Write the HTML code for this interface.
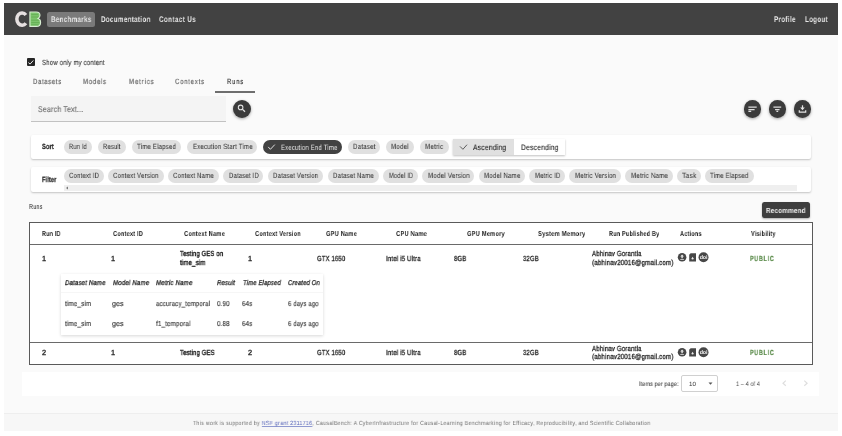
<!DOCTYPE html>
<html><head><meta charset="utf-8"><style>
html,body{margin:0;padding:0;background:#fff;width:842px;height:436px;overflow:hidden}
body{position:relative;font-family:"Liberation Sans",sans-serif}
.t{position:absolute;white-space:nowrap;font-family:"Liberation Sans",sans-serif;will-change:transform;text-rendering:geometricPrecision}
.r{position:absolute;box-sizing:border-box}
svg.r{overflow:visible}
</style></head><body>
<div class="r" style="left:4px;top:3px;width:834.00px;height:428.00px;background:#fafafa"></div>
<div class="r" style="left:4px;top:3px;width:834.00px;height:32.30px;background:#424242"></div>
<svg class="r" style="left:13px;top:10px" width="32" height="18" viewBox="0 0 32 18"><path d="M12.9 5.0 A5.2 6.1 0 1 0 12.9 13.2" fill="none" stroke="#e6e0e0" stroke-width="3.5"/><path d="M16.9 2.0 H23.2 C26.0 2.0 27.0 3.6 27.0 5.3 C27.0 6.8 26.2 7.9 25.1 8.5 C26.8 9.1 27.6 10.6 27.6 12.4 C27.6 14.9 25.9 16.4 23.3 16.4 H16.9 Z" fill="#7cc46c" stroke="#d8eed2" stroke-width="1.1"/><path d="M18.2 4.6 H25 M18.2 7 H25.4 M18.2 10.2 H26.2 M18.2 12.6 H26.2 M18.2 14.8 H25.5" stroke="#58a348" stroke-width="0.6"/></svg>
<div class="r" style="left:47px;top:11.5px;width:48.00px;height:15.90px;background:#7a7a7a;border-radius:2.5px"></div>
<div class="t" style="left:50.70px;top:16.00px;font-size:8.2px;line-height:8.2px;font-weight:bold;letter-spacing:0.422px;color:#e6e6e6;transform:scaleX(0.760);transform-origin:0 0;">Benchmarks</div>
<div class="t" style="left:100.60px;top:16.00px;font-size:8.2px;line-height:8.2px;font-weight:bold;letter-spacing:0.443px;color:#e6e6e6;transform:scaleX(0.760);transform-origin:0 0;">Documentation</div>
<div class="t" style="left:158.80px;top:16.00px;font-size:8.2px;line-height:8.2px;font-weight:bold;letter-spacing:0.571px;color:#e6e6e6;transform:scaleX(0.760);transform-origin:0 0;">Contact Us</div>
<div class="t" style="left:773.50px;top:16.00px;font-size:8.2px;line-height:8.2px;font-weight:bold;letter-spacing:0.484px;color:#e6e6e6;transform:scaleX(0.760);transform-origin:0 0;">Profile</div>
<div class="t" style="left:804.60px;top:16.00px;font-size:8.2px;line-height:8.2px;font-weight:bold;letter-spacing:0.393px;color:#e6e6e6;transform:scaleX(0.760);transform-origin:0 0;">Logout</div>
<div class="r" style="left:26.8px;top:58px;width:8.30px;height:8.20px;background:#262626;border-radius:1px"></div>
<svg class="r" style="left:26.8px;top:58px" width="8.3" height="8.2" viewBox="0 0 8.3 8.2"><path d="M1.4 4.6 L3.1 6.1 L6.3 2.5" fill="none" stroke="#eee" stroke-width="1.0"/></svg>
<div class="t" style="left:41.70px;top:59.00px;font-size:7.6px;line-height:7.6px;letter-spacing:0.228px;color:#333;transform:scaleX(0.796);transform-origin:0 0;-webkit-text-stroke:0.10px #333;">Show only my content</div>
<div class="t" style="left:32.80px;top:78.00px;font-size:7.6px;line-height:7.6px;letter-spacing:0.751px;color:#616161;transform:scaleX(0.800);transform-origin:0 0;-webkit-text-stroke:0.15px #616161;">Datasets</div>
<div class="t" style="left:83.20px;top:78.00px;font-size:7.6px;line-height:7.6px;letter-spacing:0.875px;color:#616161;transform:scaleX(0.800);transform-origin:0 0;-webkit-text-stroke:0.15px #616161;">Models</div>
<div class="t" style="left:128.60px;top:78.00px;font-size:7.6px;line-height:7.6px;letter-spacing:1.065px;color:#616161;transform:scaleX(0.800);transform-origin:0 0;-webkit-text-stroke:0.15px #616161;">Metrics</div>
<div class="t" style="left:175.00px;top:78.00px;font-size:7.6px;line-height:7.6px;letter-spacing:0.894px;color:#616161;transform:scaleX(0.800);transform-origin:0 0;-webkit-text-stroke:0.15px #616161;">Contexts</div>
<div class="t" style="left:226.50px;top:78.00px;font-size:7.6px;line-height:7.6px;letter-spacing:0.837px;color:#333;transform:scaleX(0.800);transform-origin:0 0;-webkit-text-stroke:0.15px #333;">Runs</div>
<div class="r" style="left:215px;top:91.2px;width:40.20px;height:1.70px;background:#6e6e6e"></div>
<div class="r" style="left:30.7px;top:96.3px;width:195.00px;height:25.30px;background:#f4f4f4"></div>
<div class="r" style="left:30.7px;top:120.6px;width:195.00px;height:0.90px;background:#c2c2c2"></div>
<div class="t" style="left:37.80px;top:105.00px;font-size:8.4px;line-height:8.4px;letter-spacing:0.252px;color:#707070;transform:scaleX(0.831);transform-origin:0 0;-webkit-text-stroke:0.15px #707070;">Search Text...</div>
<div class="r" style="left:233px;top:99.5px;width:18px;height:18px;border-radius:50%;background:#3b3b3b;box-shadow:0 1px 3px rgba(0,0,0,.35)"></div>
<div class="r" style="left:743.75px;top:100.1px;width:17.5px;height:17.5px;border-radius:50%;background:#3b3b3b;box-shadow:0 1px 3px rgba(0,0,0,.35)"></div>
<div class="r" style="left:768.65px;top:100.1px;width:17.5px;height:17.5px;border-radius:50%;background:#3b3b3b;box-shadow:0 1px 3px rgba(0,0,0,.35)"></div>
<div class="r" style="left:793.75px;top:100.1px;width:17.5px;height:17.5px;border-radius:50%;background:#3b3b3b;box-shadow:0 1px 3px rgba(0,0,0,.35)"></div>
<svg class="r" style="left:0;top:0" width="842" height="436" viewBox="0 0 842 436"><circle cx="240.6" cy="107.4" r="2.3" fill="none" stroke="#e2e2e2" stroke-width="1.05"/><path d="M242.3 109.1 L245 111.8" stroke="#e2e2e2" stroke-width="1.3"/><path d="M748.4 107.05h8.3M748.4 109.5h6.2M748.4 111.4h2.8" stroke="#dcdcdc" stroke-width="1.25"/><path d="M773.4 107.1h7.8M775.05 109.5h4.5M776.4 111.4h1.8" stroke="#dcdcdc" stroke-width="1.25"/><path d="M802.5 105.3V108.6" stroke="#e4e4e4" stroke-width="1.2"/><path d="M800.2 107.5H804.8L802.5 110.2Z" fill="#e4e4e4"/><path d="M799.3 110.3V112.2H805.7V110.3" fill="none" stroke="#e4e4e4" stroke-width="1.2"/></svg>
<div class="r" style="left:31px;top:135px;width:780.00px;height:24.30px;background:#fff;border-radius:2px;box-shadow:0 1px 2px rgba(0,0,0,.22)"></div>
<div class="t" style="left:41.70px;top:143.00px;font-size:7.6px;line-height:7.6px;font-weight:bold;letter-spacing:0.228px;color:#222;transform:scaleX(0.743);transform-origin:0 0;-webkit-text-stroke:0.25px #222;">Sort</div>
<div class="r" style="left:64px;top:140px;width:28.20px;height:13.80px;background:#e0e0e0;border-radius:6.90px"></div>
<div class="t" style="left:69.20px;top:143.00px;font-size:7.6px;line-height:7.6px;letter-spacing:0.228px;color:#333;transform:scaleX(0.756);transform-origin:0 0;-webkit-text-stroke:0.05px #333;">Run Id</div>
<div class="r" style="left:98.1px;top:140px;width:27.80px;height:13.80px;background:#e0e0e0;border-radius:6.90px"></div>
<div class="t" style="left:103.30px;top:143.00px;font-size:7.6px;line-height:7.6px;letter-spacing:0.228px;color:#333;transform:scaleX(0.767);transform-origin:0 0;-webkit-text-stroke:0.05px #333;">Result</div>
<div class="r" style="left:132.1px;top:140px;width:49.20px;height:13.80px;background:#e0e0e0;border-radius:6.90px"></div>
<div class="t" style="left:137.30px;top:143.00px;font-size:7.6px;line-height:7.6px;letter-spacing:0.228px;color:#333;transform:scaleX(0.797);transform-origin:0 0;-webkit-text-stroke:0.05px #333;">Time Elapsed</div>
<div class="r" style="left:187.3px;top:140px;width:70.10px;height:13.80px;background:#e0e0e0;border-radius:6.90px"></div>
<div class="t" style="left:192.50px;top:143.00px;font-size:7.6px;line-height:7.6px;letter-spacing:0.228px;color:#333;transform:scaleX(0.802);transform-origin:0 0;-webkit-text-stroke:0.05px #333;">Execution Start Time</div>
<div class="r" style="left:262.8px;top:140px;width:79.60px;height:13.80px;background:#424242;border-radius:7px"></div>
<div class="t" style="left:280.70px;top:144.00px;font-size:7.6px;line-height:7.6px;letter-spacing:0.228px;color:#e6e6e6;transform:scaleX(0.788);transform-origin:0 0;">Execution End Time</div>
<div class="r" style="left:347.6px;top:140px;width:32.80px;height:13.80px;background:#e0e0e0;border-radius:6.90px"></div>
<div class="t" style="left:352.80px;top:143.00px;font-size:7.6px;line-height:7.6px;letter-spacing:0.228px;color:#333;transform:scaleX(0.813);transform-origin:0 0;-webkit-text-stroke:0.05px #333;">Dataset</div>
<div class="r" style="left:386.1px;top:140px;width:28.00px;height:13.80px;background:#e0e0e0;border-radius:6.90px"></div>
<div class="t" style="left:391.30px;top:143.00px;font-size:7.6px;line-height:7.6px;letter-spacing:0.228px;color:#333;transform:scaleX(0.814);transform-origin:0 0;-webkit-text-stroke:0.05px #333;">Model</div>
<div class="r" style="left:420.1px;top:140px;width:28.50px;height:13.80px;background:#e0e0e0;border-radius:6.90px"></div>
<div class="t" style="left:425.30px;top:143.00px;font-size:7.6px;line-height:7.6px;letter-spacing:0.228px;color:#333;transform:scaleX(0.829);transform-origin:0 0;-webkit-text-stroke:0.05px #333;">Metric</div>
<div class="r" style="left:452.7px;top:138.8px;width:112.40px;height:16.60px;background:#fff;box-shadow:0 1px 2px rgba(0,0,0,.25)"></div>
<div class="r" style="left:452.7px;top:138.8px;width:61.10px;height:16.60px;background:#e0e0e0"></div>
<div class="t" style="left:473.30px;top:144.00px;font-size:8.0px;line-height:8.0px;letter-spacing:0.240px;color:#222;transform:scaleX(0.845);transform-origin:0 0;-webkit-text-stroke:0.10px #222;">Ascending</div>
<div class="t" style="left:520.80px;top:144.00px;font-size:8.0px;line-height:8.0px;letter-spacing:0.240px;color:#222;transform:scaleX(0.843);transform-origin:0 0;-webkit-text-stroke:0.10px #222;">Descending</div>
<div class="r" style="left:31px;top:166.8px;width:780.00px;height:25.20px;background:#fff;border-radius:2px;box-shadow:0 1px 2px rgba(0,0,0,.22)"></div>
<div class="t" style="left:41.60px;top:176.00px;font-size:7.6px;line-height:7.6px;font-weight:bold;letter-spacing:0.228px;color:#222;transform:scaleX(0.725);transform-origin:0 0;-webkit-text-stroke:0.25px #222;">Filter</div>
<div class="r" style="left:63.5px;top:168.7px;width:40.40px;height:14.20px;background:#e0e0e0;border-radius:7.10px"></div>
<div class="t" style="left:68.70px;top:172.00px;font-size:7.6px;line-height:7.6px;letter-spacing:0.228px;color:#333;transform:scaleX(0.790);transform-origin:0 0;-webkit-text-stroke:0.05px #333;">Context ID</div>
<div class="r" style="left:108.1px;top:168.7px;width:55.90px;height:14.20px;background:#e0e0e0;border-radius:7.10px"></div>
<div class="t" style="left:113.30px;top:172.00px;font-size:7.6px;line-height:7.6px;letter-spacing:0.228px;color:#333;transform:scaleX(0.800);transform-origin:0 0;-webkit-text-stroke:0.05px #333;">Context Version</div>
<div class="r" style="left:168.2px;top:168.7px;width:51.10px;height:14.20px;background:#e0e0e0;border-radius:7.10px"></div>
<div class="t" style="left:173.40px;top:172.00px;font-size:7.6px;line-height:7.6px;letter-spacing:0.228px;color:#333;transform:scaleX(0.797);transform-origin:0 0;-webkit-text-stroke:0.05px #333;">Context Name</div>
<div class="r" style="left:223.3px;top:168.7px;width:40.10px;height:14.20px;background:#e0e0e0;border-radius:7.10px"></div>
<div class="t" style="left:228.50px;top:172.00px;font-size:7.6px;line-height:7.6px;letter-spacing:0.228px;color:#333;transform:scaleX(0.783);transform-origin:0 0;-webkit-text-stroke:0.05px #333;">Dataset ID</div>
<div class="r" style="left:267.9px;top:168.7px;width:55.50px;height:14.20px;background:#e0e0e0;border-radius:7.10px"></div>
<div class="t" style="left:273.10px;top:172.00px;font-size:7.6px;line-height:7.6px;letter-spacing:0.228px;color:#333;transform:scaleX(0.793);transform-origin:0 0;-webkit-text-stroke:0.05px #333;">Dataset Version</div>
<div class="r" style="left:327.8px;top:168.7px;width:51.10px;height:14.20px;background:#e0e0e0;border-radius:7.10px"></div>
<div class="t" style="left:333.00px;top:172.00px;font-size:7.6px;line-height:7.6px;letter-spacing:0.228px;color:#333;transform:scaleX(0.797);transform-origin:0 0;-webkit-text-stroke:0.05px #333;">Dataset Name</div>
<div class="r" style="left:383.3px;top:168.7px;width:34.50px;height:14.20px;background:#e0e0e0;border-radius:7.10px"></div>
<div class="t" style="left:388.50px;top:172.00px;font-size:7.6px;line-height:7.6px;letter-spacing:0.228px;color:#333;transform:scaleX(0.753);transform-origin:0 0;-webkit-text-stroke:0.05px #333;">Model ID</div>
<div class="r" style="left:422.4px;top:168.7px;width:52.00px;height:14.20px;background:#e0e0e0;border-radius:7.10px"></div>
<div class="t" style="left:427.60px;top:172.00px;font-size:7.6px;line-height:7.6px;letter-spacing:0.228px;color:#333;transform:scaleX(0.817);transform-origin:0 0;-webkit-text-stroke:0.05px #333;">Model Version</div>
<div class="r" style="left:478.8px;top:168.7px;width:46.70px;height:14.20px;background:#e0e0e0;border-radius:7.10px"></div>
<div class="t" style="left:484.00px;top:172.00px;font-size:7.6px;line-height:7.6px;letter-spacing:0.228px;color:#333;transform:scaleX(0.804);transform-origin:0 0;-webkit-text-stroke:0.05px #333;">Model Name</div>
<div class="r" style="left:529.3px;top:168.7px;width:35.70px;height:14.20px;background:#e0e0e0;border-radius:7.10px"></div>
<div class="t" style="left:534.50px;top:172.00px;font-size:7.6px;line-height:7.6px;letter-spacing:0.228px;color:#333;transform:scaleX(0.785);transform-origin:0 0;-webkit-text-stroke:0.05px #333;">Metric ID</div>
<div class="r" style="left:569.4px;top:168.7px;width:51.40px;height:14.20px;background:#e0e0e0;border-radius:7.10px"></div>
<div class="t" style="left:574.60px;top:172.00px;font-size:7.6px;line-height:7.6px;letter-spacing:0.228px;color:#333;transform:scaleX(0.802);transform-origin:0 0;-webkit-text-stroke:0.05px #333;">Metric Version</div>
<div class="r" style="left:625.3px;top:168.7px;width:47.30px;height:14.20px;background:#e0e0e0;border-radius:7.10px"></div>
<div class="t" style="left:630.50px;top:172.00px;font-size:7.6px;line-height:7.6px;letter-spacing:0.228px;color:#333;transform:scaleX(0.814);transform-origin:0 0;-webkit-text-stroke:0.05px #333;">Metric Name</div>
<div class="r" style="left:676.6px;top:168.7px;width:24.80px;height:14.20px;background:#e0e0e0;border-radius:7.10px"></div>
<div class="t" style="left:681.80px;top:172.00px;font-size:7.6px;line-height:7.6px;letter-spacing:0.228px;color:#333;transform:scaleX(0.882);transform-origin:0 0;-webkit-text-stroke:0.05px #333;">Task</div>
<div class="r" style="left:705px;top:168.7px;width:48.60px;height:14.20px;background:#e0e0e0;border-radius:7.10px"></div>
<div class="t" style="left:710.20px;top:172.00px;font-size:7.6px;line-height:7.6px;letter-spacing:0.228px;color:#333;transform:scaleX(0.785);transform-origin:0 0;-webkit-text-stroke:0.05px #333;">Time Elapsed</div>
<div class="r" style="left:64.2px;top:185px;width:732.80px;height:6.00px;background:#efefef"></div>
<svg class="r" style="left:65px;top:186px" width="4" height="4" viewBox="0 0 4 4"><path d="M3 0.5 L1 2 L3 3.5Z" fill="#777"/></svg>
<div class="t" style="left:29.30px;top:203.00px;font-size:7.2px;line-height:7.2px;letter-spacing:0.216px;color:#444;transform:scaleX(0.774);transform-origin:0 0;-webkit-text-stroke:0.10px #444;">Runs</div>
<div class="r" style="left:762.4px;top:202.1px;width:47.20px;height:16.00px;background:#3e3e3e;border-radius:2.5px;box-shadow:0 1px 2px rgba(0,0,0,.3)"></div>
<div class="t" style="left:765.80px;top:207.00px;font-size:7.4px;line-height:7.4px;font-weight:bold;letter-spacing:0.222px;color:#f2f2f2;transform:scaleX(0.857);transform-origin:0 0;">Recommend</div>
<div class="r" style="left:29px;top:221.7px;width:783.8px;height:143.2px;background:#fff;border:1px solid #5a5a5a"></div>
<div class="r" style="left:29.5px;top:243.6px;width:782.50px;height:1.00px;background:#6a6a6a"></div>
<div class="r" style="left:29.5px;top:341.8px;width:782.50px;height:1.00px;background:#6a6a6a"></div>
<div class="t" style="left:42.10px;top:230.00px;font-size:7.2px;line-height:7.2px;font-weight:bold;letter-spacing:0.216px;color:#222;transform:scaleX(0.762);transform-origin:0 0;">Run ID</div>
<div class="t" style="left:113.10px;top:230.00px;font-size:7.2px;line-height:7.2px;font-weight:bold;letter-spacing:0.216px;color:#222;transform:scaleX(0.788);transform-origin:0 0;">Context ID</div>
<div class="t" style="left:183.80px;top:230.00px;font-size:7.2px;line-height:7.2px;font-weight:bold;letter-spacing:0.216px;color:#222;transform:scaleX(0.807);transform-origin:0 0;">Context Name</div>
<div class="t" style="left:254.75px;top:230.00px;font-size:7.2px;line-height:7.2px;font-weight:bold;letter-spacing:0.216px;color:#222;transform:scaleX(0.793);transform-origin:0 0;">Context Version</div>
<div class="t" style="left:325.50px;top:230.00px;font-size:7.2px;line-height:7.2px;font-weight:bold;letter-spacing:0.216px;color:#222;transform:scaleX(0.798);transform-origin:0 0;">GPU Name</div>
<div class="t" style="left:396.10px;top:230.00px;font-size:7.2px;line-height:7.2px;font-weight:bold;letter-spacing:0.216px;color:#222;transform:scaleX(0.806);transform-origin:0 0;">CPU Name</div>
<div class="t" style="left:467.10px;top:230.00px;font-size:7.2px;line-height:7.2px;font-weight:bold;letter-spacing:0.216px;color:#222;transform:scaleX(0.802);transform-origin:0 0;">GPU Memory</div>
<div class="t" style="left:537.80px;top:230.00px;font-size:7.2px;line-height:7.2px;font-weight:bold;letter-spacing:0.216px;color:#222;transform:scaleX(0.818);transform-origin:0 0;">System Memory</div>
<div class="t" style="left:608.80px;top:230.00px;font-size:7.2px;line-height:7.2px;font-weight:bold;letter-spacing:0.216px;color:#222;transform:scaleX(0.776);transform-origin:0 0;">Run Published By</div>
<div class="t" style="left:680.10px;top:230.00px;font-size:7.2px;line-height:7.2px;font-weight:bold;letter-spacing:0.216px;color:#222;transform:scaleX(0.776);transform-origin:0 0;">Actions</div>
<div class="t" style="left:750.90px;top:230.00px;font-size:7.2px;line-height:7.2px;font-weight:bold;letter-spacing:0.216px;color:#222;transform:scaleX(0.783);transform-origin:0 0;">Visibility</div>
<div class="t" style="left:42.20px;top:255.00px;font-size:7.4px;line-height:7.4px;color:#222;-webkit-text-stroke:0.30px #222;">1</div>
<div class="t" style="left:111.10px;top:255.00px;font-size:7.4px;line-height:7.4px;color:#222;-webkit-text-stroke:0.30px #222;">1</div>
<div class="t" style="left:179.60px;top:250.00px;font-size:7.4px;line-height:7.4px;letter-spacing:0.222px;color:#222;transform:scaleX(0.794);transform-origin:0 0;-webkit-text-stroke:0.40px #222;">Testing GES on</div>
<div class="t" style="left:179.60px;top:259.00px;font-size:7.4px;line-height:7.4px;letter-spacing:0.222px;color:#222;transform:scaleX(0.815);transform-origin:0 0;-webkit-text-stroke:0.40px #222;">time_sim</div>
<div class="t" style="left:248.30px;top:255.00px;font-size:7.4px;line-height:7.4px;color:#222;-webkit-text-stroke:0.30px #222;">1</div>
<div class="t" style="left:316.80px;top:255.00px;font-size:7.4px;line-height:7.4px;letter-spacing:0.222px;color:#222;transform:scaleX(0.796);transform-origin:0 0;-webkit-text-stroke:0.30px #222;">GTX 1650</div>
<div class="t" style="left:385.80px;top:255.00px;font-size:7.4px;line-height:7.4px;letter-spacing:0.222px;color:#222;transform:scaleX(0.817);transform-origin:0 0;-webkit-text-stroke:0.30px #222;">Intel i5 Ultra</div>
<div class="t" style="left:453.80px;top:255.00px;font-size:7.4px;line-height:7.4px;letter-spacing:0.222px;color:#222;transform:scaleX(0.813);transform-origin:0 0;-webkit-text-stroke:0.30px #222;">8GB</div>
<div class="t" style="left:523.00px;top:255.00px;font-size:7.4px;line-height:7.4px;letter-spacing:0.222px;color:#222;transform:scaleX(0.802);transform-origin:0 0;-webkit-text-stroke:0.30px #222;">32GB</div>
<div class="t" style="left:591.90px;top:250.00px;font-size:7.4px;line-height:7.4px;letter-spacing:0.222px;color:#222;transform:scaleX(0.818);transform-origin:0 0;-webkit-text-stroke:0.30px #222;">Abhinav Gorantla</div>
<div class="t" style="left:591.90px;top:259.00px;font-size:7.4px;line-height:7.4px;letter-spacing:0.222px;color:#222;transform:scaleX(0.833);transform-origin:0 0;-webkit-text-stroke:0.30px #222;">(abhinav20016@gmail.com)</div>
<svg class="r" style="left:677px;top:252px;will-change:transform" width="33" height="11" viewBox="0 0 33 11"><circle cx="5.1" cy="5.2" r="4.3" fill="#474747"/><path d="M5.1 2.5 L7.0 4.6 H5.8 V6.2 H4.4 V4.6 H3.2Z M3.3 6.9 H6.9 V7.7 H3.3Z" fill="#e6e6e6"/><path d="M13.6 1.2 H19 V9.5 H12.2 V2.7 Z" fill="#474747"/><path d="M15.6 4.7 L16.5 6.3 A0.95 0.95 0 1 1 14.7 6.3 Z" fill="#eee"/><circle cx="26.5" cy="5.2" r="5.0" fill="#474747"/><text x="26.5" y="7.0" font-family="Liberation Sans" font-weight="bold" font-size="5.4" fill="#f0f0f0" text-anchor="middle" text-rendering="geometricPrecision" letter-spacing="-0.2">doi</text></svg>
<div class="t" style="left:749.50px;top:255.00px;font-size:7.4px;line-height:7.4px;font-weight:bold;letter-spacing:0.897px;color:#5c8c4c;transform:scaleX(0.740);transform-origin:0 0;-webkit-text-stroke:0.20px #5c8c4c;">PUBLIC</div>
<div class="t" style="left:42.20px;top:349.00px;font-size:7.4px;line-height:7.4px;color:#222;-webkit-text-stroke:0.30px #222;">2</div>
<div class="t" style="left:111.10px;top:349.00px;font-size:7.4px;line-height:7.4px;color:#222;-webkit-text-stroke:0.30px #222;">1</div>
<div class="t" style="left:179.50px;top:349.00px;font-size:7.4px;line-height:7.4px;letter-spacing:0.222px;color:#222;transform:scaleX(0.800);transform-origin:0 0;-webkit-text-stroke:0.40px #222;">Testing GES</div>
<div class="t" style="left:248.30px;top:349.00px;font-size:7.4px;line-height:7.4px;color:#222;-webkit-text-stroke:0.30px #222;">2</div>
<div class="t" style="left:316.80px;top:349.00px;font-size:7.4px;line-height:7.4px;letter-spacing:0.222px;color:#222;transform:scaleX(0.796);transform-origin:0 0;-webkit-text-stroke:0.30px #222;">GTX 1650</div>
<div class="t" style="left:385.80px;top:349.00px;font-size:7.4px;line-height:7.4px;letter-spacing:0.222px;color:#222;transform:scaleX(0.817);transform-origin:0 0;-webkit-text-stroke:0.30px #222;">Intel i5 Ultra</div>
<div class="t" style="left:453.80px;top:349.00px;font-size:7.4px;line-height:7.4px;letter-spacing:0.222px;color:#222;transform:scaleX(0.813);transform-origin:0 0;-webkit-text-stroke:0.30px #222;">8GB</div>
<div class="t" style="left:523.00px;top:349.00px;font-size:7.4px;line-height:7.4px;letter-spacing:0.222px;color:#222;transform:scaleX(0.802);transform-origin:0 0;-webkit-text-stroke:0.30px #222;">32GB</div>
<div class="t" style="left:591.90px;top:345.00px;font-size:7.4px;line-height:7.4px;letter-spacing:0.222px;color:#222;transform:scaleX(0.818);transform-origin:0 0;-webkit-text-stroke:0.30px #222;">Abhinav Gorantla</div>
<div class="t" style="left:591.90px;top:353.00px;font-size:7.4px;line-height:7.4px;letter-spacing:0.222px;color:#222;transform:scaleX(0.833);transform-origin:0 0;-webkit-text-stroke:0.30px #222;">(abhinav20016@gmail.com)</div>
<svg class="r" style="left:677px;top:347px;will-change:transform" width="33" height="11" viewBox="0 0 33 11"><circle cx="5.1" cy="5.2" r="4.3" fill="#474747"/><path d="M5.1 2.5 L7.0 4.6 H5.8 V6.2 H4.4 V4.6 H3.2Z M3.3 6.9 H6.9 V7.7 H3.3Z" fill="#e6e6e6"/><path d="M13.6 1.2 H19 V9.5 H12.2 V2.7 Z" fill="#474747"/><path d="M15.6 4.7 L16.5 6.3 A0.95 0.95 0 1 1 14.7 6.3 Z" fill="#eee"/><circle cx="26.5" cy="5.2" r="5.0" fill="#474747"/><text x="26.5" y="7.0" font-family="Liberation Sans" font-weight="bold" font-size="5.4" fill="#f0f0f0" text-anchor="middle" text-rendering="geometricPrecision" letter-spacing="-0.2">doi</text></svg>
<div class="t" style="left:749.50px;top:349.00px;font-size:7.4px;line-height:7.4px;font-weight:bold;letter-spacing:0.897px;color:#5c8c4c;transform:scaleX(0.740);transform-origin:0 0;-webkit-text-stroke:0.20px #5c8c4c;">PUBLIC</div>
<div class="r" style="left:60.8px;top:274.4px;width:261.90px;height:60.60px;background:#fff;box-shadow:0 1px 3px rgba(0,0,0,.16)"></div>
<div class="r" style="left:60.8px;top:292px;width:261.90px;height:0.70px;background:#f6f6f6"></div>
<div class="t" style="left:65.30px;top:280.00px;font-size:7.0px;line-height:7.0px;font-style:italic;letter-spacing:0.210px;color:#2a2a2a;transform:scaleX(0.859);transform-origin:0 0;-webkit-text-stroke:0.30px #2a2a2a;">Dataset Name</div>
<div class="t" style="left:112.90px;top:280.00px;font-size:7.0px;line-height:7.0px;font-style:italic;letter-spacing:0.210px;color:#2a2a2a;transform:scaleX(0.868);transform-origin:0 0;-webkit-text-stroke:0.30px #2a2a2a;">Model Name</div>
<div class="t" style="left:155.90px;top:280.00px;font-size:7.0px;line-height:7.0px;font-style:italic;letter-spacing:0.210px;color:#2a2a2a;transform:scaleX(0.869);transform-origin:0 0;-webkit-text-stroke:0.30px #2a2a2a;">Metric Name</div>
<div class="t" style="left:217.30px;top:280.00px;font-size:7.0px;line-height:7.0px;font-style:italic;letter-spacing:0.210px;color:#2a2a2a;transform:scaleX(0.856);transform-origin:0 0;-webkit-text-stroke:0.30px #2a2a2a;">Result</div>
<div class="t" style="left:243.10px;top:280.00px;font-size:7.0px;line-height:7.0px;font-style:italic;letter-spacing:0.210px;color:#2a2a2a;transform:scaleX(0.836);transform-origin:0 0;-webkit-text-stroke:0.30px #2a2a2a;">Time Elapsed</div>
<div class="t" style="left:288.00px;top:280.00px;font-size:7.0px;line-height:7.0px;font-style:italic;letter-spacing:0.210px;color:#2a2a2a;transform:scaleX(0.833);transform-origin:0 0;-webkit-text-stroke:0.30px #2a2a2a;">Created On</div>
<div class="t" style="left:65.10px;top:300.00px;font-size:7.2px;line-height:7.2px;letter-spacing:0.216px;color:#484848;transform:scaleX(0.861);transform-origin:0 0;-webkit-text-stroke:0.20px #484848;">time_sim</div>
<div class="t" style="left:112.10px;top:300.00px;font-size:7.2px;line-height:7.2px;color:#484848;-webkit-text-stroke:0.20px #484848;">ges</div>
<div class="t" style="left:155.50px;top:300.00px;font-size:7.2px;line-height:7.2px;letter-spacing:0.216px;color:#484848;transform:scaleX(0.842);transform-origin:0 0;-webkit-text-stroke:0.20px #484848;">accuracy_temporal</div>
<div class="t" style="left:217.10px;top:300.00px;font-size:7.2px;line-height:7.2px;letter-spacing:0.216px;color:#484848;transform:scaleX(0.849);transform-origin:0 0;-webkit-text-stroke:0.20px #484848;">0.90</div>
<div class="t" style="left:242.20px;top:300.00px;font-size:7.2px;line-height:7.2px;letter-spacing:0.216px;color:#484848;transform:scaleX(0.847);transform-origin:0 0;-webkit-text-stroke:0.20px #484848;">64s</div>
<div class="t" style="left:288.00px;top:300.00px;font-size:7.2px;line-height:7.2px;letter-spacing:0.216px;color:#484848;transform:scaleX(0.823);transform-origin:0 0;-webkit-text-stroke:0.20px #484848;">6 days ago</div>
<div class="t" style="left:65.10px;top:320.00px;font-size:7.2px;line-height:7.2px;letter-spacing:0.216px;color:#484848;transform:scaleX(0.861);transform-origin:0 0;-webkit-text-stroke:0.20px #484848;">time_sim</div>
<div class="t" style="left:112.10px;top:320.00px;font-size:7.2px;line-height:7.2px;color:#484848;-webkit-text-stroke:0.20px #484848;">ges</div>
<div class="t" style="left:155.50px;top:320.00px;font-size:7.2px;line-height:7.2px;letter-spacing:0.216px;color:#484848;transform:scaleX(0.859);transform-origin:0 0;-webkit-text-stroke:0.20px #484848;">f1_temporal</div>
<div class="t" style="left:217.10px;top:320.00px;font-size:7.2px;line-height:7.2px;letter-spacing:0.216px;color:#484848;transform:scaleX(0.849);transform-origin:0 0;-webkit-text-stroke:0.20px #484848;">0.88</div>
<div class="t" style="left:242.20px;top:320.00px;font-size:7.2px;line-height:7.2px;letter-spacing:0.216px;color:#484848;transform:scaleX(0.847);transform-origin:0 0;-webkit-text-stroke:0.20px #484848;">64s</div>
<div class="t" style="left:288.00px;top:320.00px;font-size:7.2px;line-height:7.2px;letter-spacing:0.216px;color:#484848;transform:scaleX(0.823);transform-origin:0 0;-webkit-text-stroke:0.20px #484848;">6 days ago</div>
<div class="r" style="left:22px;top:371.6px;width:797.00px;height:24.40px;background:#fff"></div>
<div class="t" style="left:638.60px;top:382.00px;font-size:6.4px;line-height:6.4px;letter-spacing:0.192px;color:#444;transform:scaleX(0.840);transform-origin:0 0;-webkit-text-stroke:0.10px #444;">Items per page:</div>
<div class="r" style="left:681.2px;top:374.7px;width:37.3px;height:17.7px;border:1px solid #d0d0d0;border-radius:2px"></div>
<div class="t" style="left:688.80px;top:382.00px;font-size:6.2px;line-height:6.2px;color:#333;">10</div>
<svg class="r" style="left:707.5px;top:382px" width="5" height="3" viewBox="0 0 5 3"><path d="M0.5 0.5 H4.5 L2.5 2.7Z" fill="#555"/></svg>
<div class="t" style="left:735.60px;top:382.00px;font-size:6.4px;line-height:6.4px;letter-spacing:0.192px;color:#444;transform:scaleX(0.838);transform-origin:0 0;">1 – 4 of 4</div>
<svg class="r" style="left:781px;top:379px" width="30" height="9" viewBox="0 0 30 9"><path d="M4.8 1.6 L2 4.2 L4.8 6.8" fill="none" stroke="#dedede" stroke-width="1.2"/><path d="M23.3 1.6 L26.1 4.2 L23.3 6.8" fill="none" stroke="#dedede" stroke-width="1.2"/></svg>
<div class="r" style="left:4px;top:412.5px;width:834.00px;height:18.50px;background:#f7f7f7;border-top:1px solid #eeeeee"></div>
<div class="t" style="left:192.60px;top:421px;font-size:6.0px;line-height:6.0px;letter-spacing:0.397px;color:#6f6f6f;transform:scaleX(0.86);transform-origin:0 0">This work is supported by <span style="color:#5563b8;text-decoration:underline;text-decoration-color:#8f99d0">NSF grant 2311716</span>, CausalBench: A CyberInfrastructure for Causal-Learning Benchmarking for Efficacy, Reproducibility, and Scientific Collaboration</div>
<svg class="r" style="left:0;top:0" width="842" height="436" viewBox="0 0 842 436"><path d="M268.2 146.9 L270.4 149.3 L274.8 144.6" fill="none" stroke="#e8e8e8" stroke-width="0.95"/><path d="M460 146.4 L462.9 149.3 L467 144.7" fill="none" stroke="#555" stroke-width="0.95"/></svg>
</body></html>
